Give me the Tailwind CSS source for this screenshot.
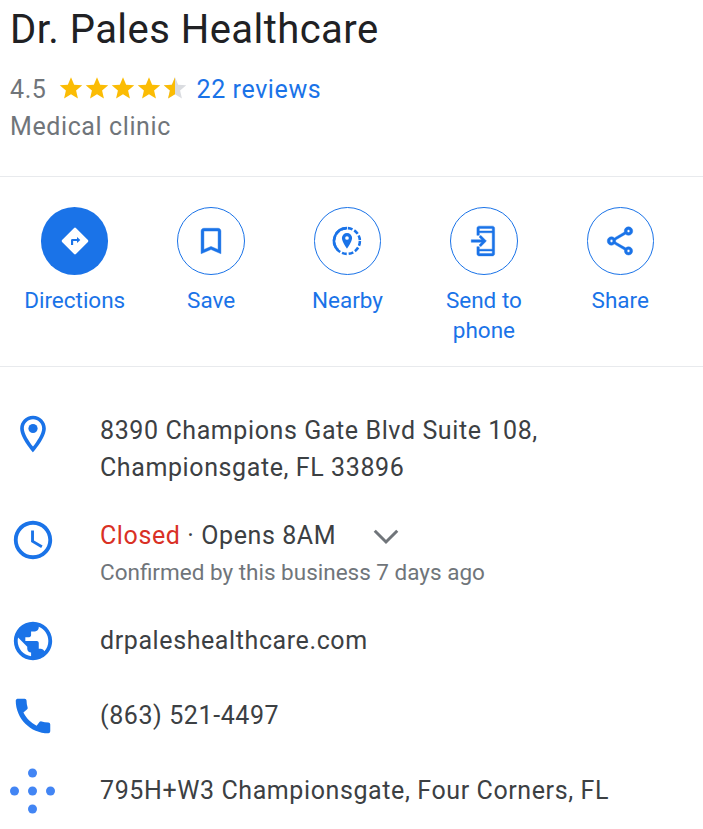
<!DOCTYPE html>
<html><head><meta charset="utf-8"><title>Dr. Pales Healthcare</title>
<script src="https://cdn.jsdelivr.net/npm/@tailwindcss/browser@4"></script></head>
<body class="bg-white">
<main class="w-[703px] h-[829px] overflow-hidden font-['Roboto',sans-serif]">
<header class="h-[176px] pl-[10px] border-b border-[#e8eaed] box-content">
  <h1 class="pt-[8px] text-[40px] leading-[44px] tracking-[0.45px] text-[#202124] font-normal">Dr. Pales Healthcare</h1>
  <div class="mt-[19px] flex items-center h-[37px] text-[25px] tracking-[0.6px]">
    <span class="text-[#70757a]">4.5</span>
    <span class="flex ml-[11px] w-[130px] -mt-[3px]" aria-label="4.5 stars">
      <svg class="w-[26px] h-[26px]" viewBox="0 0 24 24"><path fill="#fbbc04" d="M12 2l2.900 6.900 7.500.6-5.700 4.900 1.700 7.300L12 17.800l-6.400 3.900 1.700-7.300L1.600 9.500l7.500-.6z"/></svg>
      <svg class="w-[26px] h-[26px]" viewBox="0 0 24 24"><path fill="#fbbc04" d="M12 2l2.900 6.900 7.500.6-5.700 4.900 1.700 7.300L12 17.800l-6.400 3.900 1.700-7.300L1.600 9.500l7.500-.6z"/></svg>
      <svg class="w-[26px] h-[26px]" viewBox="0 0 24 24"><path fill="#fbbc04" d="M12 2l2.900 6.900 7.500.6-5.700 4.900 1.700 7.300L12 17.800l-6.400 3.900 1.700-7.300L1.600 9.500l7.500-.6z"/></svg>
      <svg class="w-[26px] h-[26px]" viewBox="0 0 24 24"><path fill="#fbbc04" d="M12 2l2.900 6.900 7.500.6-5.700 4.900 1.700 7.300L12 17.800l-6.400 3.900 1.700-7.300L1.600 9.500l7.500-.6z"/></svg>
      <svg class="w-[26px] h-[26px]" viewBox="0 0 24 24"><path fill="#dadce0" d="M12 2l2.900 6.900 7.500.6-5.700 4.900 1.700 7.300L12 17.800l-6.400 3.900 1.700-7.300L1.600 9.500l7.500-.6z"/><path fill="#fbbc04" d="M12 2v15.800l-6.400 3.900 1.700-7.300L1.600 9.500l7.500-.6z"/></svg>
    </span>
    <a class="ml-[9px] text-[#1a73e8]">22 reviews</a>
  </div>
  <p class="text-[25px] leading-[37px] tracking-[0.6px] text-[#70757a]">Medical clinic</p>
</header>

<nav class="h-[159px] pl-[6.500px] pr-[14.500px] pt-[30px] border-b border-[#e8eaed] box-content grid grid-cols-5 content-start text-[22.5px] leading-[30px] text-[#1a73e8] text-center">
  <div class="flex flex-col items-center">
    <span class="w-[67.500px] h-[68px] rounded-full bg-[#1a73e8] flex items-center justify-center mb-[10px]">
      <svg class="w-[32px] h-[32px]" viewBox="0 0 24 24"><path fill="#fff" fill-rule="evenodd" d="M21.700 11.300l-9-9a1 1 0 0 0-1.400 0l-9 9a1 1 0 0 0 0 1.400l9 9a1 1 0 0 0 1.400 0l9-9a1 1 0 0 0 0-1.400zM13.500 9v1.500H10a1 1 0 0 0-1 1V15h1.600v-3h2.900v1.500l2.500-2.250z"/></svg>
    </span>Directions
  </div>
  <div class="flex flex-col items-center">
    <span class="w-[67.500px] h-[68px] rounded-full border border-[#1a73e8] flex items-center justify-center mb-[10px]">
      <svg class="w-[34px] h-[34px]" viewBox="0 0 24 24"><path fill="#1a73e8" stroke="#1a73e8" stroke-width=".3" d="M17 3H7c-1.100 0-2 .9-2 2v16l7-3 7 3V5c0-1.100-.9-2-2-2zm0 15-5-2.180L7 18V5h10v13z"/></svg>
    </span>Save
  </div>
  <div class="flex flex-col items-center">
    <span class="w-[67.500px] h-[68px] rounded-full border border-[#1a73e8] flex items-center justify-center mb-[10px]">
      <svg class="w-[34px] h-[34px]" viewBox="0 0 24 24"><circle cx="12" cy="12" r="9.100" fill="none" stroke="#1a73e8" stroke-width="1.800" stroke-dasharray="3.400 1.400"/><path fill="none" stroke="#1a73e8" stroke-width="1.800" d="M5.600 18.500A9.100 9.100 0 0 1 12 2.900"/><path fill="#1a73e8" fill-rule="evenodd" d="M12 6.300a3.600 3.600 0 0 0-3.600 3.600c0 2.800 3.600 7.500 3.600 7.500s3.600-4.700 3.600-7.500A3.600 3.600 0 0 0 12 6.300zm0 4.900a1.300 1.300 0 1 1 0-2.600 1.300 1.300 0 0 1 0 2.600z"/></svg>
    </span>Nearby
  </div>
  <div class="flex flex-col items-center">
    <span class="w-[67.500px] h-[68px] rounded-full border border-[#1a73e8] flex items-center justify-center mb-[10px]">
      <svg class="w-[34px] h-[34px]" viewBox="0 0 24 24"><path fill="#1a73e8" stroke="#1a73e8" stroke-width=".3" d="M18 1.500H8.500c-1 0-1.500.7-1.500 1.500v5h1.700V6.200h9.100v11.600H8.700V16H7v5c0 .8.500 1.500 1.500 1.500H18c1 0 1.500-.7 1.500-1.500V3c0-.8-.5-1.500-1.500-1.500zM8.700 4.900V3.200h9.100v1.700zM17.800 20.800H8.700v-1.700h9.100z"/><path fill="#1a73e8" stroke="#1a73e8" stroke-width=".3" d="M9.700 8l-1.200 1.200 1.900 1.900H3v1.800h7.400l-1.900 1.900L9.700 16l4-4z"/></svg>
    </span>Send to<br>phone
  </div>
  <div class="flex flex-col items-center">
    <span class="w-[67.500px] h-[68px] rounded-full border border-[#1a73e8] flex items-center justify-center mb-[10px]">
      <svg class="w-[34px] h-[34px]" viewBox="0 0 24 24"><path fill="#1a73e8" stroke="#1a73e8" stroke-width=".3" d="M18 16.080c-.76 0-1.440.3-1.960.77L8.910 12.700c.05-.23.09-.46.09-.7s-.04-.47-.09-.7l7.050-4.110c.54.5 1.250.81 2.040.81 1.660 0 3-1.340 3-3s-1.340-3-3-3-3 1.340-3 3c0 .24.040.47.090.7L8.040 9.810C7.500 9.310 6.790 9 6 9c-1.660 0-3 1.340-3 3s1.340 3 3 3c.79 0 1.500-.31 2.040-.81l7.120 4.160c-.05.21-.08.43-.08.65 0 1.610 1.310 2.920 2.920 2.920s2.920-1.310 2.920-2.920-1.310-2.920-2.920-2.920zM18 4c.55 0 1 .45 1 1s-.45 1-1 1-1-.45-1-1 .45-1 1-1zM6 13c-.55 0-1-.45-1-1s.45-1 1-1 1 .45 1 1-.45 1-1 1zm12 7.020c-.55 0-1-.45-1-1s.45-1 1-1 1 .45 1 1-.45 1-1 1z"/></svg>
    </span>Share
  </div>
</nav>

<section class="text-[25px] leading-[37px] tracking-[0.6px] text-[#3c4043]">
  <div class="flex pt-[45px]">
    <span class="w-[100px] shrink-0 pl-[11px]">
      <svg class="w-[44px] h-[44px]" viewBox="0 0 24 24"><path fill="#1a73e8" d="M12 2C8.130 2 5 5.130 5 9c0 5.250 7 13 7 13s7-7.750 7-13c0-3.870-3.130-7-7-7zM7 9c0-2.760 2.240-5 5-5s5 2.240 5 5c0 2.880-2.880 7.190-5 9.880C9.920 16.210 7 11.850 7 9z"/><circle fill="#1a73e8" cx="12" cy="9" r="2.500"/></svg>
    </span>
    <p>8390 Champions Gate Blvd Suite 108,<br>Championsgate, FL 33896</p>
  </div>
  <div class="flex pt-[31px]">
    <span class="w-[100px] shrink-0 pl-[10px]">
      <svg class="w-[46px] h-[46px]" viewBox="0 0 24 24"><path fill="#1a73e8" d="M11.990 2C6.470 2 2 6.480 2 12s4.470 10 9.990 10C17.520 22 22 17.520 22 12S17.520 2 11.990 2zM12 20c-4.420 0-8-3.580-8-8s3.580-8 8-8 8 3.580 8 8-3.580 8-8 8z"/><path fill="#1a73e8" d="M12.500 7H11v6l5.250 3.150.75-1.230-4.500-2.670z"/></svg>
    </span>
    <div>
      <p class="flex items-center"><span class="text-[#d93025]">Closed</span>&nbsp;· Opens 8AM
        <svg class="ml-[32px] w-[36px] h-[36px]" viewBox="0 0 24 24"><path fill="none" stroke="#70757a" stroke-width="2" d="M4.500 8.500l7.500 7.500 7.500-7.500"/></svg>
      </p>
      <p class="text-[22.500px] leading-[37px] tracking-normal text-[#70757a]">Confirmed by this business 7 days ago</p>
    </div>
  </div>
  <div class="flex pt-[31px]">
    <span class="w-[100px] shrink-0 h-[37px] pl-[10px] flex items-center">
      <svg class="w-[46px] h-[46px] shrink-0" viewBox="0 0 24 24"><path fill="#1a73e8" d="M12 2C6.480 2 2 6.480 2 12s4.480 10 10 10 10-4.480 10-10S17.520 2 12 2zm-1 17.930C7.050 19.440 4 16.080 4 12c0-.62.080-1.210.21-1.790L9 15v1c0 1.100.9 2 2 2v1.930zm6.900-2.540c-.26-.81-1-1.390-1.900-1.390h-1v-3c0-.55-.45-1-1-1H8v-2h2c.55 0 1-.45 1-1V7h2c1.100 0 2-.9 2-2v-.41c2.930 1.190 5 4.060 5 7.410 0 2.080-.8 3.970-2.100 5.390z"/></svg>
    </span>
    <p>drpaleshealthcare.com</p>
  </div>
  <div class="flex pt-[38px]">
    <span class="w-[100px] shrink-0 h-[37px] pl-[10px] flex items-center">
      <svg class="w-[46px] h-[46px] shrink-0" viewBox="0 0 24 24"><path fill="#1a73e8" d="M20.010 15.380c-1.230 0-2.420-.2-3.530-.56a.977.977 0 0 0-1.010.24l-1.570 1.970c-2.830-1.350-5.480-3.900-6.890-6.830l1.950-1.660c.27-.28.350-.67.240-1.020-.37-1.110-.56-2.300-.56-3.530 0-.54-.45-.99-.99-.99H4.190C3.650 3 3 3.240 3 3.990 3 13.280 10.730 21 20.010 21c.71 0 .99-.63.990-1.180v-3.450c0-.54-.45-.99-.99-.99z"/></svg>
    </span>
    <p>(863) 521-4497</p>
  </div>
  <div class="flex pt-[38px]">
    <span class="w-[100px] shrink-0 h-[37px] pl-[10px] flex items-center">
      <svg class="w-[46px] h-[46px] shrink-0" viewBox="0 0 46 46"><g fill="#4285f4"><circle cx="22.500" cy="5" r="4.500"/><circle cx="4.500" cy="23" r="4.500"/><circle cx="22.500" cy="23" r="4.500"/><circle cx="40.500" cy="23" r="4.500"/><circle cx="22.500" cy="41" r="4.500"/></g></svg>
    </span>
    <p>795H+W3 Championsgate, Four Corners, FL</p>
  </div>
</section>
</main>
</body></html>
